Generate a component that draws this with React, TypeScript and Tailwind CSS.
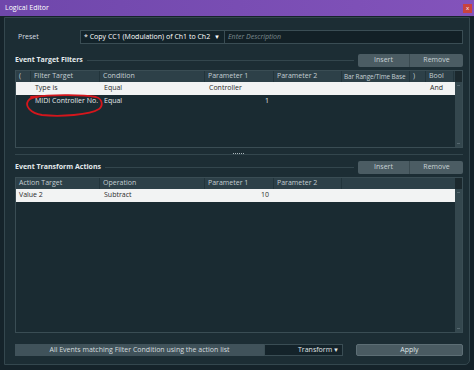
import React from 'react';

const filterCols = ['(', 'Filter Target', 'Condition', 'Parameter 1', 'Parameter 2', 'Bar Range/Time Base', ')', 'Bool'];
const actionCols = ['Action Target', 'Operation', 'Parameter 1', 'Parameter 2', ''];

const SectionHeader: React.FC<{ title: string }> = ({ title }) => (
  <div className="flex items-center h-[13px]">
    <span className="font-bold text-[7px] text-[#e4eaec] whitespace-nowrap">{title}</span>
    <div className="flex-1 h-px bg-[#33464d] mx-[4px]" />
    <div className="flex h-full rounded-[2px] overflow-hidden">
      <button className="w-[52px] h-full bg-[#4b5c63] text-[#c9d2d6] border-r border-[#3a4a50]">Insert</button>
      <button className="w-[53px] h-full bg-[#4b5c63] text-[#c9d2d6]">Remove</button>
    </div>
  </div>
);

const Scrollbar: React.FC = () => (
  <div className="w-[7px] flex flex-col">
    <div className="h-[11px] bg-[#1b282d]" />
    <div className="flex-1 bg-[#34474e] flex flex-col justify-between items-center py-[3px]">
      <div className="w-[3px] h-px bg-[#56686f]" />
      <div className="w-[3px] h-px bg-[#56686f]" />
    </div>
  </div>
);

export default function App() {
  return (
    <div className="relative w-[474px] h-[370px] bg-[#15232a] flex flex-col overflow-hidden font-['Open_Sans',sans-serif] text-[7px] text-[#d3dbde]">
      {/* title bar */}
      <div className="h-[16px] bg-gradient-to-r from-[#6f47ab] to-[#8353bb] flex items-center justify-between pl-[5px] pr-[2px]">
        <span className="text-white text-[7px]">Logical Editor</span>
        <div className="w-[9px] h-[9px] bg-[#c9433f] text-white text-[6px] leading-[9px] text-center">x</div>
      </div>

      <div className="flex-1 flex px-[4px] pt-px pb-[5px]">
        <div className="flex-1 flex flex-col bg-[#1c2d34] border border-[#34474e] rounded-br-[5px] pl-[10px] pr-[6px] pt-[12px]">
          {/* preset row */}
          <div className="flex h-[14px]">
            <div className="w-[65px] pl-[3px] flex items-center text-[#d8dfe2]">Preset</div>
            <div className="w-[145px] flex items-center justify-between bg-[#13232a] border border-[#3a4d54] pl-[3px] pr-[4px] text-white text-[7px] whitespace-nowrap">
              <span>* Copy CC1 (Modulation) of Ch1 to Ch2</span>
              <span className="text-[6px]">▼</span>
            </div>
            <div className="flex-1 flex items-center bg-[#122026] border border-l-0 border-[#3a4d54] px-[3px] italic text-[#7d8b90]">
              Enter Description
            </div>
          </div>

          {/* filters */}
          <div className="mt-[10px]">
            <SectionHeader title="Event Target Filters" />
          </div>
          <div className="mt-[3px] h-[78px] flex border border-[#3a4d54] bg-[#1a2b32]">
            <div className="flex-1 flex flex-col">
              <div className="grid grid-cols-[15px_69px_105px_69px_68px_68px_16px_28px] h-[11px] bg-[#2d4048] text-[#c5cfd3]">
                {filterCols.map((c, i) => (
                  <div
                    key={i}
                    className={
                      i === 5
                        ? 'flex items-center pl-[2px] border-r border-[#22343b] whitespace-nowrap text-[6.4px] tracking-[-0.1px]'
                        : 'flex items-center pl-[3px] border-r border-[#22343b] whitespace-nowrap'
                    }
                  >
                    {c}
                  </div>
                ))}
              </div>
              <div className="grid grid-cols-[15px_69px_105px_69px_68px_68px_16px_28px] h-[13px] bg-[#f2f3f3] text-[#2b2b2b]">
                <div />
                <div className="flex items-center pl-[4px]">Type is</div>
                <div className="flex items-center pl-[4px]">Equal</div>
                <div className="flex items-center pl-[4px]">Controller</div>
                <div />
                <div />
                <div />
                <div className="flex items-center pl-[4px]">And</div>
              </div>
              <div className="grid grid-cols-[15px_69px_105px_69px_68px_68px_16px_28px] h-[13px] text-[#e3e9eb]">
                <div />
                <div className="flex items-center pl-[4px] whitespace-nowrap">MIDI Controller No.</div>
                <div className="flex items-center pl-[4px]">Equal</div>
                <div className="flex items-center justify-end pr-[5px]">1</div>
              </div>
            </div>
            <Scrollbar />
          </div>

          {/* divider */}
          <div className="mt-[6px] relative h-px bg-[#33464d]">
            <div className="absolute left-[218px] -top-[1px] flex gap-[1px]">
              {[0, 1, 2, 3, 4, 5].map((d) => (
                <div key={d} className="w-px h-px bg-[#aab6ba]" />
              ))}
            </div>
          </div>

          {/* actions */}
          <div className="mt-[6px]">
            <SectionHeader title="Event Transform Actions" />
          </div>
          <div className="mt-[3px] h-[156px] flex border border-[#3a4d54] bg-[#1a2b32]">
            <div className="flex-1 flex flex-col">
              <div className="grid grid-cols-[84px_105px_69px_68px_1fr] h-[11px] bg-[#2d4048] text-[#c5cfd3]">
                {actionCols.map((c, i) => (
                  <div key={i} className="flex items-center pl-[3px] border-r border-[#22343b] last:border-r-0">{c}</div>
                ))}
              </div>
              <div className="grid grid-cols-[84px_105px_69px_68px_1fr] h-[13px] bg-[#f2f3f3] text-[#2b2b2b]">
                <div className="flex items-center pl-[3px]">Value 2</div>
                <div className="flex items-center pl-[4px]">Subtract</div>
                <div className="flex items-center justify-end pr-[5px]">10</div>
              </div>
            </div>
            <Scrollbar />
          </div>

          {/* bottom bar */}
          <div className="mt-[11px] flex h-[12px]">
            <div className="w-[249px] bg-[#40525a] flex items-center justify-center text-[#d5dcdf]">
              All Events matching Filter Condition using the action list
            </div>
            <div className="w-[79px] bg-[#14232a] border border-[#3a4d54] flex items-center justify-between pl-[33px] pr-[3px] text-[#e1e7e9]">
              <span>Transform</span>
              <span className="text-[6px]">▼</span>
            </div>
            <div className="ml-[13px] flex-1 bg-[#4a5b62] border border-[#5d6e75] rounded-[2px] flex items-center justify-center text-[#dfe5e7]">
              Apply
            </div>
          </div>
        </div>
      </div>

      {/* hand-drawn annotation */}
      <svg className="absolute inset-0 pointer-events-none" width="474" height="370" viewBox="0 0 474 370">
        <path
          d="M 31 97 C 50 95, 80 94, 96 97 C 103 99, 103 106, 99 109 C 90 115, 60 117, 42 115 C 30 113, 25 106, 28 101 C 30 98, 34 97, 38 97"
          fill="none"
          stroke="#d4161c"
          strokeWidth="1.8"
          strokeLinecap="round"
        />
      </svg>
    </div>
  );
}
